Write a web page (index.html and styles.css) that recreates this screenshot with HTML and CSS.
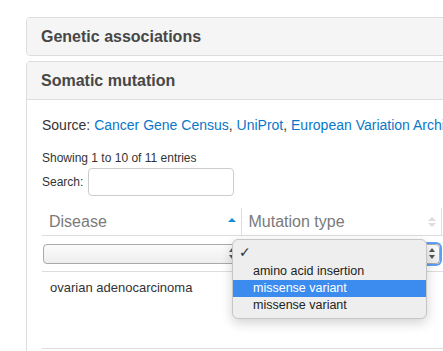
FILE: index.html
```html
<!DOCTYPE html>
<html lang="en">
<head>
    <meta charset="UTF-8">
    <title>Somatic mutation</title>
    <link rel="stylesheet" href="styles.css">
</head>
<body>
    <div class="page">
        <div class="panel">
            <div class="panel-heading">Genetic associations</div>
        </div>
        <div class="panel">
            <div class="panel-heading open">Somatic mutation</div>
            <div class="panel-body">
                <p class="source">Source: <a href="#">Cancer Gene Census</a>, <a href="#">UniProt</a>, <a href="#">European Variation Archive</a></p>
                <div class="info">Showing 1 to 10 of 11 entries</div>
                <div class="search">
                    <label for="q">Search:</label>
                    <input type="text" id="q">
                </div>
                <table class="data-table">
                    <colgroup>
                        <col class="col-disease">
                        <col class="col-type">
                        <col class="col-rest">
                    </colgroup>
                    <thead>
                        <tr class="head-row">
                            <th class="divided">Disease<span class="sort-up"></span></th>
                            <th class="divided">Mutation type<span class="sort-both"></span></th>
                            <th></th>
                        </tr>
                        <tr class="filter-row">
                            <th><div class="fake-select"><span class="arrows"></span></div></th>
                            <th><div class="fake-select focused"><span class="arrows"></span></div></th>
                            <th></th>
                        </tr>
                    </thead>
                    <tbody>
                        <tr class="data-row">
                            <td>ovarian adenocarcinoma</td>
                            <td></td>
                            <td></td>
                        </tr>
                    </tbody>
                </table>
            </div>
        </div>

        <div class="dropdown">
            <div class="option checked"><span class="check">&#10003;</span></div>
            <div class="option">amino acid insertion</div>
            <div class="option active">missense variant</div>
            <div class="option">missense variant</div>
        </div>
    </div>
</body>
</html>
```

FILE: styles.css
```css
html, body {
    margin: 0;
    padding: 0;
    overflow: hidden;
    background: #ffffff;
}

body {
    font-family: "Liberation Sans", Arial, sans-serif;
    color: #333333;
}

.page {
    position: relative;
    padding: 17px 0 0 26px;
    width: 700px;
    height: 351px;
    box-sizing: border-box;
}

.panel {
    border: 1px solid #dddddd;
    border-radius: 4px;
    margin-bottom: 5px;
    overflow: hidden;
}

.panel-heading {
    background-color: #f5f5f5;
    padding: 10px 14px;
    font-size: 16px;
    line-height: 17px;
    font-weight: bold;
    color: #474747;
}

.panel-heading.open {
    border-bottom: 1px solid #dddddd;
}

.panel-body {
    padding: 15px 15px 0 15px;
    height: 260px;
}

.source {
    margin: 0 0 15px 0;
    font-size: 14px;
    line-height: 20px;
    color: #333333;
    white-space: nowrap;
}

.source a {
    color: #0a77c9;
    text-decoration: none;
}

.info {
    font-size: 12px;
    line-height: 16px;
    color: #333333;
}

.search {
    display: flex;
    align-items: center;
    gap: 5px;
    margin-top: 2px;
    font-size: 12px;
}

.search input {
    width: 146px;
    height: 28px;
    box-sizing: border-box;
    border: 1px solid #cccccc;
    border-radius: 4px;
    margin: 0;
}

.data-table {
    margin-top: 12px;
    border-collapse: collapse;
    table-layout: fixed;
    width: 599px;
}

.col-disease { width: 199px; }
.col-type { width: 200px; }
.col-rest { width: 200px; }

.head-row th {
    position: relative;
    height: 27px;
    padding: 0 0 0 7px;
    text-align: left;
    font-size: 16px;
    font-weight: normal;
    color: #7a7a7a;
    border-bottom: 1px solid #dddddd;
}

.head-row th.divided {
    border-right: 1px solid #dddddd;
}

.sort-up {
    position: absolute;
    right: 5px;
    top: 10px;
    width: 0;
    height: 0;
    border-left: 4px solid transparent;
    border-right: 4px solid transparent;
    border-bottom: 4px solid #1a8ad9;
}

.sort-both {
    position: absolute;
    right: 5px;
    top: 9px;
    width: 8px;
    height: 10px;
}

.sort-both::before,
.sort-both::after {
    content: "";
    position: absolute;
    left: 0;
    border-left: 4px solid transparent;
    border-right: 4px solid transparent;
}

.sort-both::before {
    top: 0;
    border-bottom: 4px solid #dddddd;
}

.sort-both::after {
    bottom: 0;
    border-top: 4px solid #dddddd;
}

.filter-row th {
    height: 35px;
    padding: 0;
    border-bottom: 1px solid #dddddd;
    vertical-align: middle;
}

.fake-select {
    position: relative;
    height: 18px;
    margin: 0 1px 0 1px;
    border: 1px solid #a9a9a9;
    border-radius: 4px;
    background: linear-gradient(#fbfbfb, #eeeeee);
}

.fake-select.focused {
    margin: 0 1px 0 8px;
    box-shadow: 0 0 0 2px #5e9ef4;
}

.arrows {
    position: absolute;
    right: 3px;
    top: 3px;
    width: 7px;
    height: 12px;
}

.arrows::before,
.arrows::after {
    content: "";
    position: absolute;
    left: 0;
    border-left: 3.5px solid transparent;
    border-right: 3.5px solid transparent;
}

.arrows::before {
    top: 0;
    border-bottom: 4px solid #555555;
}

.arrows::after {
    bottom: 1px;
    border-top: 4px solid #555555;
}

.data-row td {
    height: 68px;
    padding: 8px 0 0 8px;
    vertical-align: top;
    font-size: 13px;
    line-height: 16px;
    color: #333333;
    border-bottom: 1px solid #dddddd;
}

.dropdown {
    position: absolute;
    left: 232px;
    top: 239px;
    width: 195px;
    box-sizing: border-box;
    padding: 4px 0 4px 0;
    background: #eeeeee;
    border: 1px solid #c6c6c6;
    border-radius: 6px;
    box-shadow: 0 4px 12px rgba(0, 0, 0, 0.18);
    font-size: 12.5px;
    color: #222222;
}

.option {
    height: 17px;
    line-height: 17px;
    padding-left: 20px;
    white-space: nowrap;
}

.option.checked {
    height: 19px;
    padding-left: 6px;
}

.check {
    font-family: "DejaVu Sans", sans-serif;
    font-size: 14px;
    font-weight: bold;
    color: #333333;
}

.option.active {
    background: #3b8cee;
    color: #ffffff;
}
```
